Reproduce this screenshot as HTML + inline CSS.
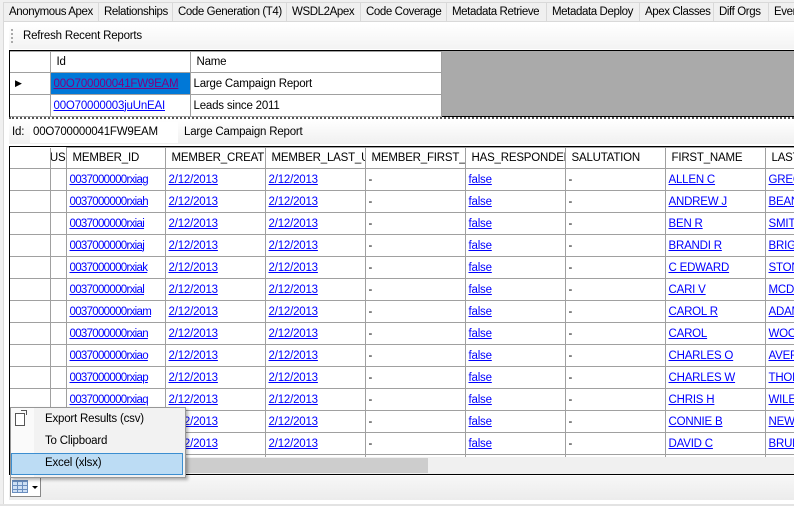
<!DOCTYPE html>
<html><head><meta charset="utf-8"><style>
*{box-sizing:border-box;margin:0;padding:0}
body{width:794px;height:506px;overflow:hidden;background:#f0f0f0;font-family:"Liberation Sans",sans-serif;font-size:11.5px;letter-spacing:-0.2px;color:#000;position:relative}
.abs{position:absolute}
.tabs{left:0;top:0;width:794px;height:22px;background:#f0f0f0}
.tab{position:absolute;top:2px;height:20px;line-height:19px;padding:0 5px;border:1px solid #d9d9d9;border-bottom:none;background:#f0f0f0;white-space:nowrap;letter-spacing:-0.4px}
.panel{left:3px;top:21px;width:791px;height:485px;background:#fff;border-left:1px solid #d9d9d9;border-top:1px solid #d9d9d9}
table{border-collapse:collapse;table-layout:fixed;position:absolute}
td{border:1px solid #a0a0a0;height:22px;padding:0 3px;white-space:nowrap;overflow:hidden;background:#fff}
a{color:#0000ff;text-decoration:underline}
.id a{letter-spacing:-0.7px}
.hd td{height:21px;padding-left:6px}
</style></head><body>
<div class="abs tabs">
<div class="tab" style="left:3px;width:96px">Anonymous Apex</div>
<div class="tab" style="left:98px;width:75px">Relationships</div>
<div class="tab" style="left:172px;width:115px">Code Generation (T4)</div>
<div class="tab" style="left:286px;width:75px">WSDL2Apex</div>
<div class="tab" style="left:360px;width:87px">Code Coverage</div>
<div class="tab" style="left:446px;width:101px">Metadata Retrieve</div>
<div class="tab" style="left:546px;width:94px">Metadata Deploy</div>
<div class="tab" style="left:639px;width:75px">Apex Classes</div>
<div class="tab" style="left:713px;width:56px">Diff Orgs</div>
<div class="tab" style="left:768px;width:40px">Even</div>
</div>
<div class="abs panel"></div>
<div class="abs" style="left:9px;top:24px;width:785px;height:25px;background:linear-gradient(#fff,#f3f3f3)"></div>
<div class="abs" style="left:11px;top:29px;width:2px;height:14px;border-left:2px dotted #aaa"></div>
<div class="abs" style="left:23px;top:30px">Refresh Recent Reports</div>
<div class="abs" style="left:9px;top:50px;width:785px;height:67px;background:#aaa;border:1px solid #000;border-right:none"></div>
<table style="left:10px;top:51px;width:431px">
<colgroup><col style="width:40px"><col style="width:140px"><col style="width:251px"></colgroup>
<tr class="hd"><td style="border-top:none;border-left:none"></td><td>Id</td><td>Name</td></tr>
<tr><td style="border-left:none;padding-left:5px;font-size:9px">&#9654;</td><td style="background:#0078d7"><a style="color:#800080">00O700000041FW9EAM</a></td><td>Large Campaign Report</td></tr>
<tr><td style="border-left:none"></td><td><a>00O70000003juUnEAI</a></td><td>Leads since 2011</td></tr>
</table>
<div class="abs" style="left:9px;top:117px;width:785px;height:2px;border-top:2px dotted #555"></div>
<div class="abs" style="left:9px;top:120px;width:785px;height:24px;background:linear-gradient(#fff,#f0f0f0)"></div>
<div class="abs" style="left:12px;top:126px">Id:</div>
<div class="abs" style="left:30px;top:122px;width:148px;height:21px;background:#fff;line-height:21px;padding-left:3px">00O700000041FW9EAM</div>
<div class="abs" style="left:184px;top:126px">Large Campaign Report</div>
<div class="abs" style="left:9px;top:146px;width:785px;height:329px;background:#fff;border:1px solid #000;border-right:none;overflow:hidden">
<table style="left:0;top:0;width:900px">
<colgroup><col style="width:40px"><col style="width:16px"><col style="width:99px"><col style="width:100px"><col style="width:100px"><col style="width:100px"><col style="width:100px"><col style="width:100px"><col style="width:100px"><col style="width:145px"></colgroup>
<tr class="hd"><td style="border-top:none;border-left:none"></td><td style="border-top:none;padding:0;text-align:right;direction:rtl">TUS</td><td>MEMBER_ID</td><td>MEMBER_CREATED</td><td>MEMBER_LAST_U</td><td>MEMBER_FIRST_</td><td>HAS_RESPONDED</td><td>SALUTATION</td><td>FIRST_NAME</td><td>LAST_NAME</td></tr>
<tr><td style="border-left:none"></td><td></td><td class="id"><a>0037000000rxiag</a></td><td><a>2/12/2013</a></td><td><a>2/12/2013</a></td><td>-</td><td><a>false</a></td><td>-</td><td><a>ALLEN C</a></td><td><a>GREG</a></td></tr>
<tr><td style="border-left:none"></td><td></td><td class="id"><a>0037000000rxiah</a></td><td><a>2/12/2013</a></td><td><a>2/12/2013</a></td><td>-</td><td><a>false</a></td><td>-</td><td><a>ANDREW J</a></td><td><a>BEAN</a></td></tr>
<tr><td style="border-left:none"></td><td></td><td class="id"><a>0037000000rxiai</a></td><td><a>2/12/2013</a></td><td><a>2/12/2013</a></td><td>-</td><td><a>false</a></td><td>-</td><td><a>BEN R</a></td><td><a>SMITH</a></td></tr>
<tr><td style="border-left:none"></td><td></td><td class="id"><a>0037000000rxiaj</a></td><td><a>2/12/2013</a></td><td><a>2/12/2013</a></td><td>-</td><td><a>false</a></td><td>-</td><td><a>BRANDI R</a></td><td><a>BRIGG</a></td></tr>
<tr><td style="border-left:none"></td><td></td><td class="id"><a>0037000000rxiak</a></td><td><a>2/12/2013</a></td><td><a>2/12/2013</a></td><td>-</td><td><a>false</a></td><td>-</td><td><a>C EDWARD</a></td><td><a>STONE</a></td></tr>
<tr><td style="border-left:none"></td><td></td><td class="id"><a>0037000000rxial</a></td><td><a>2/12/2013</a></td><td><a>2/12/2013</a></td><td>-</td><td><a>false</a></td><td>-</td><td><a>CARI V</a></td><td><a>MCDO</a></td></tr>
<tr><td style="border-left:none"></td><td></td><td class="id"><a>0037000000rxiam</a></td><td><a>2/12/2013</a></td><td><a>2/12/2013</a></td><td>-</td><td><a>false</a></td><td>-</td><td><a>CAROL R</a></td><td><a>ADAM</a></td></tr>
<tr><td style="border-left:none"></td><td></td><td class="id"><a>0037000000rxian</a></td><td><a>2/12/2013</a></td><td><a>2/12/2013</a></td><td>-</td><td><a>false</a></td><td>-</td><td><a>CAROL</a></td><td><a>WOOD</a></td></tr>
<tr><td style="border-left:none"></td><td></td><td class="id"><a>0037000000rxiao</a></td><td><a>2/12/2013</a></td><td><a>2/12/2013</a></td><td>-</td><td><a>false</a></td><td>-</td><td><a>CHARLES O</a></td><td><a>AVER</a></td></tr>
<tr><td style="border-left:none"></td><td></td><td class="id"><a>0037000000rxiap</a></td><td><a>2/12/2013</a></td><td><a>2/12/2013</a></td><td>-</td><td><a>false</a></td><td>-</td><td><a>CHARLES W</a></td><td><a>THOM</a></td></tr>
<tr><td style="border-left:none"></td><td></td><td class="id"><a>0037000000rxiaq</a></td><td><a>2/12/2013</a></td><td><a>2/12/2013</a></td><td>-</td><td><a>false</a></td><td>-</td><td><a>CHRIS H</a></td><td><a>WILE</a></td></tr>
<tr><td style="border-left:none"></td><td></td><td class="id"><a>0037000000rxiar</a></td><td><a>2/12/2013</a></td><td><a>2/12/2013</a></td><td>-</td><td><a>false</a></td><td>-</td><td><a>CONNIE B</a></td><td><a>NEW</a></td></tr>
<tr><td style="border-left:none"></td><td></td><td class="id"><a>0037000000rxias</a></td><td><a>2/12/2013</a></td><td><a>2/12/2013</a></td><td>-</td><td><a>false</a></td><td>-</td><td><a>DAVID C</a></td><td><a>BRUN</a></td></tr>
<tr><td style="border-left:none"></td><td></td><td></td><td></td><td></td><td></td><td></td><td></td><td></td><td></td></tr>
</table>
<div class="abs" style="left:0;top:310px;width:785px;height:17px;background:#f0f0f0"></div>
<div class="abs" style="left:18px;top:311px;width:400px;height:15px;background:#cdcdcd"></div>
</div>
<div class="abs" style="left:9px;top:476px;width:785px;height:24px;background:linear-gradient(#f7f7f7,#ececec)"></div>
<div class="abs" style="left:10px;top:477px;width:31px;height:20px;border:1px solid #888;background:#fff"></div>
<div class="abs" style="left:12px;top:480px;width:16px;height:13px;border:1px solid #6a8ebf;background:repeating-linear-gradient(90deg,#cfe0f5 0 4px,#6a8ebf 4px 5px),#cfe0f5"></div>
<div class="abs" style="left:12px;top:480px;width:16px;height:13px;background:repeating-linear-gradient(0deg,transparent 0 3px,#6a8ebf 3px 4px)"></div>
<div class="abs" style="left:32px;top:486px;border-left:3px solid transparent;border-right:3px solid transparent;border-top:3px solid #000"></div>
<div class="abs" style="left:0;top:504px;width:794px;height:2px;background:#e3e3e3"></div>
<div class="abs" style="left:10px;top:407px;width:176px;height:71px;background:#f2f2f2;border:1px solid #979797;box-shadow:2px 2px 3px rgba(0,0,0,.3)"></div>
<div class="abs" style="left:11px;top:408px;width:23px;height:69px;background:#fafafa"></div>
<div class="abs" style="left:15px;top:413px;width:10px;height:13px;border:1px solid #555;background:#fff"></div>
<div class="abs" style="left:21px;top:410px;width:6px;height:5px;border-top:1px solid #555;border-right:1px solid #555"></div>
<div class="abs" style="left:45px;top:413px">Export Results (csv)</div>
<div class="abs" style="left:45px;top:435px">To Clipboard</div>
<div class="abs" style="left:11px;top:453px;width:172px;height:22px;background:#bcdcf4;border:1px solid #3c8ed0"></div>
<div class="abs" style="left:45px;top:457px">Excel (xlsx)</div>
</body></html>
